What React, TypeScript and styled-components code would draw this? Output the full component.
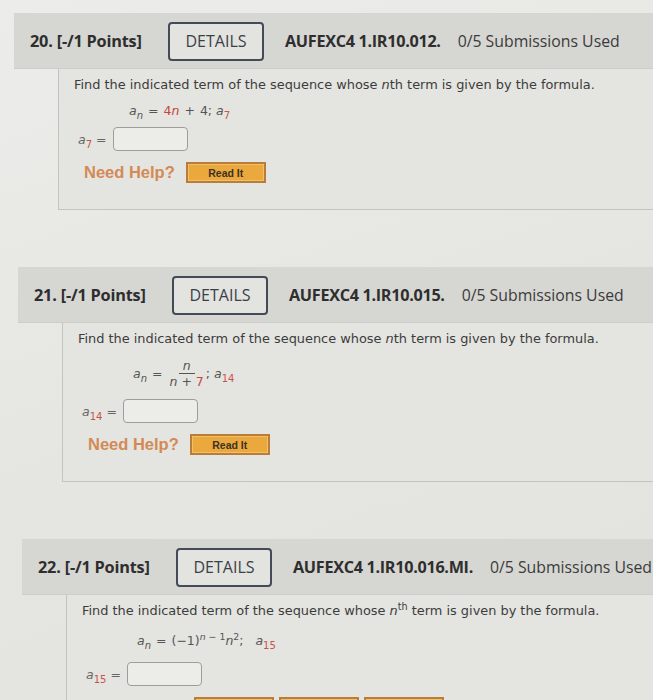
import styled, { createGlobalStyle } from 'styled-components';

import type { FC, ReactNode } from 'react';

const GlobalStyle = createGlobalStyle`
  html, body {
    margin: 0;
    padding: 0;
    background: #e6e6e2;
    overflow: hidden;
  }
  body {
    width: 653px;
    height: 700px;
  }
`;

const Page = styled.div`
  width: 653px;
  height: 700px;
  overflow: hidden;
  padding-top: 13px;
  box-sizing: border-box;
  display: flex;
  flex-direction: column;
  gap: 57px;
  background: linear-gradient(160deg, #ececea 0%, #e5e5e1 55%, #e2e2de 100%);
`;

interface IShift {
  shift: number;
}

const Question = styled.section<IShift>`
  margin-left: ${(props) => props.shift}px;
  width: 720px;
  flex: none;
`;

const Band = styled.div`
  display: flex;
  align-items: center;
  height: 56px;
  padding-left: 16px;
  background: #d6d6d2;
  box-shadow: inset 0 -1px 0 #cdcdc9;
  font-family: 'Open Sans', 'Noto Sans', sans-serif;
  font-size: 15.8px;
  color: #2e2e2e;
  white-space: nowrap;
`;

const Label = styled.div`
  flex: 0 0 138px;
  font-weight: 700;
  font-size: 16.3px;
  letter-spacing: -0.2px;
`;

const Details = styled.div`
  box-sizing: border-box;
  width: 96px;
  height: 39px;
  display: flex;
  align-items: center;
  justify-content: center;
  border: 2px solid #434b57;
  border-radius: 4px;
  background: #e3e3df;
  font-size: 16px;
  color: #3a3f48;
`;

const Code = styled.div`
  margin-left: 21px;
  font-weight: 700;
  font-size: 16.2px;
  letter-spacing: -0.3px;
`;

const Used = styled.div`
  margin-left: 17px;
  color: #3b3b3b;
`;

const Card = styled.div`
  margin-left: 44px;
  padding: 8px 0 0 15px;
  border: 1px solid #c3c3bf;
  border-top: none;
  background: #e4e4e0;
  font-family: 'DejaVu Sans', Verdana, sans-serif;
  font-size: 12.9px;
  color: #3c3c3c;
`;

const Prompt = styled.div`
  height: 16px;
  line-height: 16px;
  white-space: nowrap;
`;

interface IFormulaRow {
  height: number;
}

const FormulaRow = styled.div<IFormulaRow>`
  display: flex;
  align-items: center;
  height: ${(props) => props.height}px;
  padding-left: 55px;
  color: #555;
  font-size: 12.5px;
`;

const AnswerRow = styled.div`
  display: flex;
  align-items: center;
  gap: 6px;
  height: 24px;
  padding-left: 4px;
  color: #666;
  font-size: 12.5px;
`;

const Input = styled.div`
  box-sizing: border-box;
  width: 75px;
  height: 24px;
  border: 1px solid #9d9d99;
  border-radius: 4px;
  background: #ecece8;
`;

const HelpRow = styled.div`
  display: flex;
  align-items: center;
  height: 21px;
  margin-top: 11px;
  padding-left: 10px;
  padding-bottom: 26px;
`;

const HelpText = styled.span`
  font-family: 'Liberation Sans', Arial, sans-serif;
  font-weight: 700;
  font-size: 16.5px;
  color: #d38a55;
  margin-right: 11px;
`;

const HelpButton = styled.div`
  box-sizing: border-box;
  width: 80px;
  height: 21px;
  margin-right: 5px;
  display: flex;
  align-items: center;
  justify-content: center;
  border: 2px solid #b97d3a;
  box-shadow: inset 0 0 0 1px #f3c06a;
  background: #eba83c;
  font-family: 'Liberation Sans', Arial, sans-serif;
  font-weight: 700;
  font-size: 10.5px;
  color: #3b3224;
`;

const V = styled.i`
  font-style: italic;
`;

interface IRed {
  red?: boolean;
}

const Sub = styled.sub<IRed>`
  font-size: 0.8em;
  vertical-align: -0.35em;
  line-height: 0;
  color: ${(props) => (props.red ? '#c9534a' : 'inherit')};
`;

const Sup = styled.sup`
  font-size: 0.75em;
  vertical-align: 0.55em;
  line-height: 0;
`;

const Red = styled.span`
  color: #c9453c;
`;

const Op = styled.span`
  margin: 0 5px;
`;

const Math = styled.span`
  display: inline-flex;
  align-items: center;
  white-space: nowrap;
`;

const Frac = styled.span`
  display: inline-flex;
  flex-direction: column;
  align-items: center;
  margin: 0 2px;
  line-height: 15px;
`;

const Num = styled.span`
  padding: 0 4px;
  border-bottom: 1px solid #555;
`;

interface IQuestionProps {
  shift: number;
  num: number;
  code: string;
  prompt: ReactNode;
  formula: ReactNode;
  formulaHeight: number;
  sub: string;
  buttons: string[];
}

const QuestionBlock: FC<IQuestionProps> = (props) => (
  <Question shift={props.shift}>
    <Band>
      <Label>{props.num}. [-/1 Points]</Label>
      <Details>DETAILS</Details>
      <Code>{props.code}</Code>
      <Used>0/5 Submissions Used</Used>
    </Band>
    <Card>
      <Prompt>{props.prompt}</Prompt>
      <FormulaRow height={props.formulaHeight}>{props.formula}</FormulaRow>
      <AnswerRow>
        <span>
          <V>a</V>
          <Sub red>{props.sub}</Sub> =
        </span>
        <Input />
      </AnswerRow>
      <HelpRow>
        <HelpText>Need Help?</HelpText>
        {props.buttons.map((b) => (
          <HelpButton key={b}>{b}</HelpButton>
        ))}
      </HelpRow>
    </Card>
  </Question>
);

const App: FC = () => (
  <>
    <GlobalStyle />
    <Page>
      <QuestionBlock
        shift={14}
        num={20}
        code="AUFEXC4 1.IR10.012."
        prompt={
          <>
            Find the indicated term of the sequence whose <V>n</V>th term is given
            by the formula.
          </>
        }
        formulaHeight={34}
        formula={
          <span>
            <V>a</V>
            <Sub>
              <V>n</V>
            </Sub>
            <Op>=</Op>
            <Red>
              4<V>n</V>
            </Red>
            <Op>+</Op>4; <V>a</V>
            <Sub red>7</Sub>
          </span>
        }
        sub="7"
        buttons={['Read It']}
      />
      <QuestionBlock
        shift={18}
        num={21}
        code="AUFEXC4 1.IR10.015."
        prompt={
          <>
            Find the indicated term of the sequence whose <V>n</V>th term is given
            by the formula.
          </>
        }
        formulaHeight={52}
        formula={
          <Math>
            <span>
              <V>a</V>
              <Sub>
                <V>n</V>
              </Sub>
              <Op>=</Op>
            </span>
            <Frac>
              <Num>
                <V>n</V>
              </Num>
              <span>
                <V>n</V> + <Red>7</Red>
              </span>
            </Frac>
            <span>
              ;&nbsp;<V>a</V>
              <Sub red>14</Sub>
            </span>
          </Math>
        }
        sub="14"
        buttons={['Read It']}
      />
      <QuestionBlock
        shift={22}
        num={22}
        code="AUFEXC4 1.IR10.016.MI."
        prompt={
          <>
            Find the indicated term of the sequence whose <V>n</V>
            <Sup>th</Sup> term is given by the formula.
          </>
        }
        formulaHeight={43}
        formula={
          <span>
            <V>a</V>
            <Sub>
              <V>n</V>
            </Sub>
            <Op>=</Op>(−1)
            <Sup>
              <V>n</V> − 1
            </Sup>
            <V>n</V>
            <Sup>2</Sup>;&nbsp;&nbsp; <V>a</V>
            <Sub red>15</Sub>
          </span>
        }
        sub="15"
        buttons={['Read It', 'Watch It', 'Master It']}
      />
    </Page>
  </>
);

export default App;
